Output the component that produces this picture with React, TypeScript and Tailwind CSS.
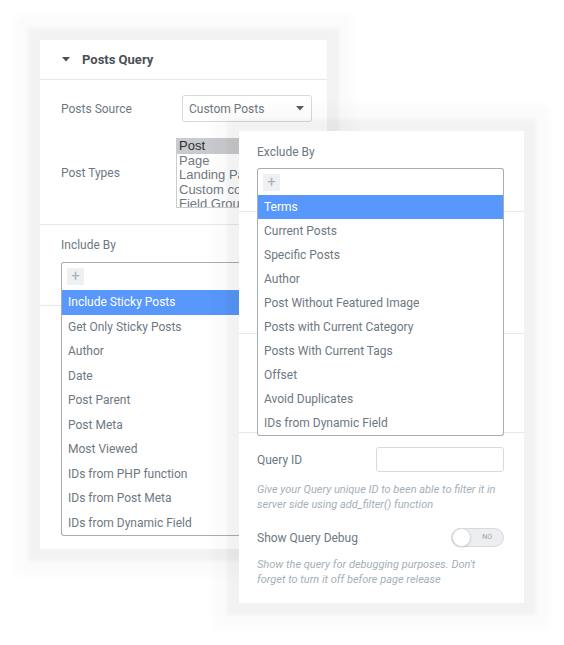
const includeItems = [
  'Include Sticky Posts',
  'Get Only Sticky Posts',
  'Author',
  'Date',
  'Post Parent',
  'Post Meta',
  'Most Viewed',
  'IDs from PHP function',
  'IDs from Post Meta',
  'IDs from Dynamic Field',
];

const excludeItems = [
  'Terms',
  'Current Posts',
  'Specific Posts',
  'Author',
  'Post Without Featured Image',
  'Posts with Current Category',
  'Posts With Current Tags',
  'Offset',
  'Avoid Duplicates',
  'IDs from Dynamic Field',
];

const postTypes = ['Post', 'Page', 'Landing Page', 'Custom code', 'Field Group'];

function Caret({ className }: { className: string }) {
  return (
    <svg width="8" height="5" viewBox="0 0 8 5" className={className}>
      <path d="M0 0 H8 L4 4.5 Z" fill="currentColor" />
    </svg>
  );
}

interface MultiSelectProps {
  items: string[];
  boxClass: string;
  rowClass: string;
}

function MultiSelect({ items, boxClass, rowClass }: MultiSelectProps) {
  return (
    <div className="relative">
      <div className={`${boxClass} border border-b-0 border-[#a8adb2] rounded-t-[3px] bg-white pl-[5px] pt-[5px]`}>
        <span className="flex h-[17px] w-[17px] items-center justify-center bg-[#eef0f2] text-[15px] leading-none text-[#a9b2b9]">+</span>
      </div>
      <ul className="absolute left-0 right-0 z-10 border border-t-0 border-[#a8adb2] bg-white rounded-b-[3px]">
        {items.map((item, i) => (
          <li
            key={item}
            className={`${rowClass} flex items-center pl-[6px] whitespace-nowrap ${
              i === 0 ? 'bg-[#5897fb] text-white' : 'text-[#6d7882]'
            }`}
          >
            {item}
          </li>
        ))}
      </ul>
    </div>
  );
}

export default function App() {
  return (
    <div className="relative h-[645px] w-[564px] overflow-hidden bg-white font-['Roboto',sans-serif] text-[12px]">
      {/* left panel */}
      <div className="absolute left-[40px] top-[40px] z-[1] h-[509px] w-[287px] bg-white shadow-[0_0_4px_12px_rgba(0,0,0,0.03),0_0_10px_26px_rgba(0,0,0,0.02)]">
        <div className="flex h-[40px] items-center gap-[12px] border-b border-[#e6e9ec] pl-[22px]">
          <Caret className="text-[#495157]" />
          <span className="text-[13px] font-bold text-[#495157]">Posts Query</span>
        </div>

        <div className="border-b border-[#e6e9ec] pl-[21px] pr-[15px] pt-[15px] pb-[16px]">
          <div className="flex items-center justify-between">
            <span className="text-[#6d7882]">Posts Source</span>
            <div className="flex h-[27px] w-[130px] items-center justify-between rounded-[3px] border border-[#d5dadf] pl-[6px] pr-[7px] text-[#6d7882]">
              <span>Custom Posts</span>
              <Caret className="text-[#555d66]" />
            </div>
          </div>
          <div className="mt-[16px] flex items-center justify-between">
            <span className="text-[#6d7882]">Post Types</span>
            <div className="h-[70px] w-[136px] overflow-hidden border border-[#c9cdd1] font-['Liberation_Sans',sans-serif] text-[13px]">
              {postTypes.map((t, i) => (
                <div
                  key={t}
                  className={`h-[14.5px] whitespace-nowrap pl-[2px] leading-[14.5px] ${
                    i === 0 ? 'bg-[#c8cacd] text-[#2b2f33]' : 'text-[#707880]'
                  }`}
                >
                  {t}
                </div>
              ))}
            </div>
          </div>
        </div>

        <div className="border-b border-[#e6e9ec] pl-[21px] pr-[15px] pt-[13px] pb-[15px]">
          <div className="mb-[10px] leading-[14px] text-[#6d7882]">Include By</div>
          <MultiSelect items={includeItems} boxClass="h-[28px]" rowClass="h-[24.5px]" />
        </div>
      </div>

      {/* right panel */}
      <div className="absolute left-[239px] top-[131px] z-[2] h-[472px] w-[285px] bg-white shadow-[0_0_4px_12px_rgba(0,0,0,0.03),0_0_10px_26px_rgba(0,0,0,0.02)]">
        <div className="border-b border-[#e6e9ec] pl-[18px] pr-[20px] pt-[14px] pb-[16px]">
          <div className="mb-[9px] leading-[14px] text-[#6d7882]">Exclude By</div>
          <MultiSelect items={excludeItems} boxClass="h-[27px]" rowClass="h-[24px]" />
        </div>
        <div className="h-[122px] border-b border-[#e6e9ec]" />
        <div className="h-[99px] border-b border-[#e6e9ec]" />

        <div className="pl-[18px] pr-[20px] pt-[14px]">
          <div className="flex items-center justify-between">
            <span className="text-[#6d7882]">Query ID</span>
            <div className="h-[25px] w-[128px] rounded-[3px] border border-[#d5dadf]" />
          </div>
          <p className="mt-[10px] text-[11px] italic leading-[15px] text-[#a4afb7]">
            <span className="block whitespace-nowrap">Give your Query unique ID to been able to filter it in</span>
            <span className="block whitespace-nowrap">server side using add_filter() function</span>
          </p>

          <div className="mt-[16px] flex items-center justify-between">
            <span className="text-[#6d7882]">Show Query Debug</span>
            <div className="relative flex h-[19px] w-[53px] items-center justify-end rounded-full border border-[#d5dadf] bg-[#eceef0] pr-[11px]">
              <span className="absolute left-0 top-[-1px] h-[19px] w-[19px] rounded-full border border-[#d5dadf] bg-white shadow-[0_1px_2px_rgba(0,0,0,0.1)]" />
              <span className="text-[7px] text-[#9aa3ab]">NO</span>
            </div>
          </div>
          <p className="mt-[10px] text-[11px] italic leading-[15px] text-[#a4afb7]">
            <span className="block whitespace-nowrap">Show the query for debugging purposes. Don't</span>
            <span className="block whitespace-nowrap">forget to turn it off before page release</span>
          </p>
        </div>
      </div>
    </div>
  );
}
